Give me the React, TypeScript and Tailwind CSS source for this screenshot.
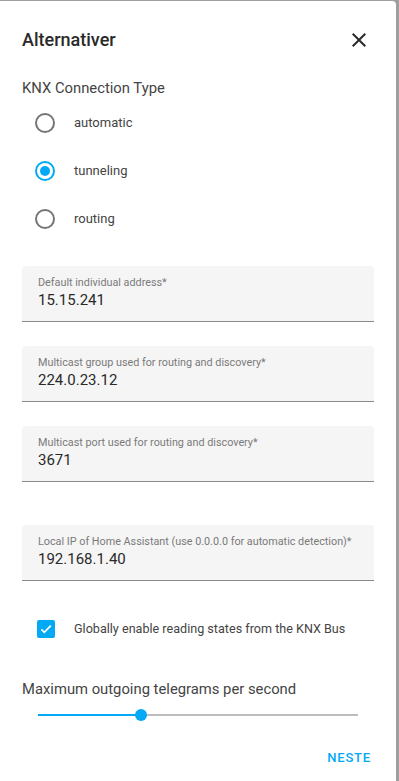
import React, { useState } from 'react';

const fields = [
  { label: 'Default individual address*', value: '15.15.241', mt: 'mt-[37px]' },
  { label: 'Multicast group used for routing and discovery*', value: '224.0.23.12', mt: 'mt-6' },
  { label: 'Multicast port used for routing and discovery*', value: '3671', mt: 'mt-6' },
  { label: 'Local IP of Home Assistant (use 0.0.0.0 for automatic detection)*', value: '192.168.1.40', mt: 'mt-[43px]' },
];

export default function App() {
  const [mode, setMode] = useState('tunneling');
  const [readState, setReadState] = useState(true);

  return (
    <div className="w-[399px] h-[781px] bg-[#9e9e9e] pt-px pr-[3px] overflow-hidden" style={{ fontFamily: 'Roboto, "Noto Sans", sans-serif' }}>
      <div className="h-full bg-white rounded-tr-[4px] flex flex-col px-[22px]">
        {/* Header */}
        <div className="flex items-center justify-between pt-[27px]">
          <h2 className="text-[18px] leading-6 font-medium text-[#2a2a2a]">Alternativer</h2>
          <button className="mr-[3px] text-[#2a2a2a]">
            <svg width="24" height="24" viewBox="0 0 24 24">
              <path fill="currentColor" d="M19,6.41L17.59,5L12,10.59L6.41,5L5,6.41L10.59,12L5,17.59L6.41,19L12,13.41L17.59,19L19,17.59L13.41,12L19,6.41Z" />
            </svg>
          </button>
        </div>

        <div className="mt-[26px] text-[14.8px] leading-5 text-[#444]">KNX Connection Type</div>

        {/* Radios */}
        <div className="flex flex-col mt-[15px] gap-[28px]">
          {['automatic', 'tunneling', 'routing'].map(opt => (
            <label key={opt} className="flex items-center h-5 cursor-pointer" onClick={() => setMode(opt)}>
              <span className={`ml-[13px] w-5 h-5 rounded-full border-2 flex items-center justify-center ${mode === opt ? 'border-[#03a9f4]' : 'border-[#757575]'}`}>
                {mode === opt && <span className="w-[10px] h-[10px] rounded-full bg-[#03a9f4]" />}
              </span>
              <span className="ml-[19px] text-[13px] text-[#444]">{opt}</span>
            </label>
          ))}
        </div>

        {/* Text fields */}
        {fields.map(f => (
          <div key={f.label} className={`${f.mt} h-[56px] bg-[#f5f5f5] rounded-t-[4px] border-b border-[#8a8a8a] px-4 pt-[10px]`}>
            <div className="text-[10.8px] leading-[14px] text-[#7a7a7a] whitespace-nowrap">{f.label}</div>
            <div className="text-[15px] leading-[18px] mt-px text-[#2a2a2a]">{f.value}</div>
          </div>
        ))}

        {/* Checkbox */}
        <label className="flex items-center mt-[39px] cursor-pointer" onClick={() => setReadState(!readState)}>
          <span className={`ml-[15px] w-[18px] h-[18px] rounded-[2px] flex items-center justify-center ${readState ? 'bg-[#03a9f4]' : 'border-2 border-[#757575]'}`}>
            {readState && (
              <svg width="14" height="14" viewBox="0 0 24 24">
                <path fill="none" stroke="white" strokeWidth="3" d="M4.1,12.7 9,17.6 20.3,6.3" />
              </svg>
            )}
          </span>
          <span className="ml-[19px] text-[12.6px] text-[#444]">Globally enable reading states from the KNX Bus</span>
        </label>

        <div className="mt-[40px] text-[14.8px] leading-5 text-[#444]">Maximum outgoing telegrams per second</div>

        {/* Slider */}
        <div className="relative mt-[8px] ml-4 w-[320px] h-4 flex items-center">
          <div className="h-[2px] w-[103px] bg-[#03a9f4]" />
          <div className="h-[2px] flex-1 bg-[#bdbdbd]" />
          <div className="absolute left-[97px] top-[2px] w-3 h-3 rounded-full bg-[#03a9f4]" />
        </div>

        <div className="flex justify-end mt-[25px] pr-[3px]">
          <button className="text-[13px] font-medium tracking-[0.8px] text-[#03a9f4]">NESTE</button>
        </div>
      </div>
    </div>
  );
}
